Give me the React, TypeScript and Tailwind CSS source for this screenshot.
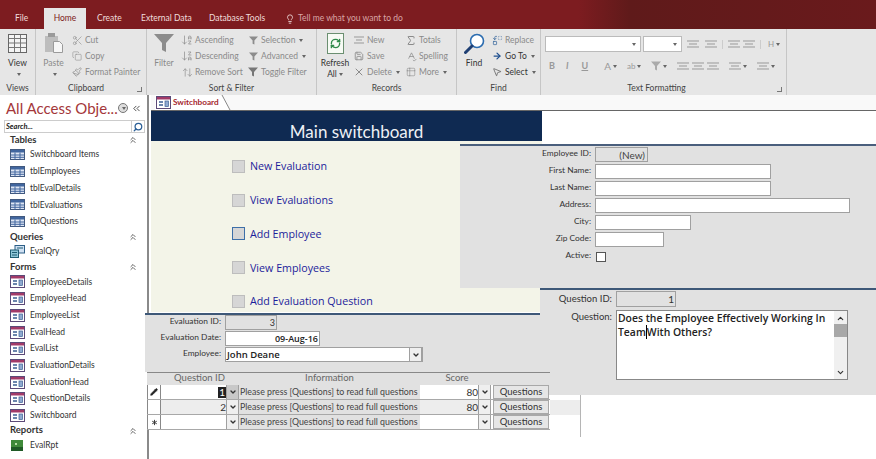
import type { ReactNode } from "react";
import {
  ArrowDownAZ,
  ArrowDownZA,
  ArrowRight,
  ArrowUpDown,
  Asterisk,
  ChevronDown,
  ChevronsLeft,
  ChevronsUp,
  ChevronUp,
  Copy,
  Lightbulb,
  MousePointer2,
  Paintbrush,
  Pencil,
  RefreshCw,
  Replace,
  Save,
  Scissors,
  Search,
  Sigma,
  SpellCheck,
  Table2,
  X,
} from "lucide-react";

const font = "font-['Lato','Open_Sans',sans-serif]";

function Caret() {
  return <span className="ml-[2px] inline-block h-0 w-0 border-x-[2px] border-t-[3px] border-x-transparent border-t-[#666]" />;
}

function TableIcon() {
  return (
    <svg width="15" height="11" viewBox="0 0 15 11" className="shrink-0">
      <rect x="0.5" y="0.5" width="14" height="10" fill="#dfe6f3" stroke="#41597f" />
      <rect x="1" y="1" width="13" height="2.5" fill="#41669f" />
      <path d="M5 3.5v7M10 3.5v7M1 6h13M1 8.3h13" stroke="#41669f" />
    </svg>
  );
}

function QueryIcon() {
  return (
    <svg width="15" height="13" viewBox="0 0 15 13" className="shrink-0">
      <rect x="5" y="0.5" width="9.5" height="7.5" fill="#cfe0f2" stroke="#2d5f86" />
      <rect x="0.5" y="5" width="8" height="7.5" fill="#8ec7d8" stroke="#1f5d72" />
      <path d="M2 7.5h5M2 10h5M7 3h6" stroke="#1f5d72" />
    </svg>
  );
}

function FormIcon() {
  return (
    <svg width="15" height="13" viewBox="0 0 15 13" className="shrink-0">
      <rect x="0.5" y="0.5" width="14" height="12" fill="#fff" stroke="#5c4a78" />
      <rect x="1" y="1" width="13" height="2.5" fill="#a23a68" />
      <path d="M3 6h4M3 9h4" stroke="#3d5f93" strokeWidth="1.5" />
      <rect x="9" y="5" width="3.5" height="5.5" fill="#8fa9d0" stroke="#3d5f93" strokeWidth="0.7" />
    </svg>
  );
}

function ReportIcon() {
  return (
    <svg width="12" height="11" viewBox="0 0 12 11" className="ml-[1px] mr-[2px] shrink-0">
      <rect width="12" height="11" fill="#3f8a3a" />
      <rect x="0" y="7" width="12" height="4" fill="#1f5a26" />
      <rect x="4" y="3" width="2" height="2" fill="#b9e0a8" />
    </svg>
  );
}

function NavHeader({ children }: { children: ReactNode }) {
  return (
    <div className="flex h-[13.5px] items-center justify-between pl-[10px] pr-[9px] text-[9.5px] font-bold text-[#333]">
      <span>{children}</span>
      <ChevronsUp size={10} strokeWidth={2} className="text-[#444]" />
    </div>
  );
}

function NavItem({ icon, children }: { icon: ReactNode; children: ReactNode }) {
  return (
    <div className="flex h-[16.7px] items-center gap-[5px] pl-[10px] text-[8.5px] text-[#333]">
      {icon}
      <span>{children}</span>
    </div>
  );
}

function NavPane() {
  const tables = ["Switchboard Items", "tblEmployees", "tblEvalDetails", "tblEvaluations", "tblQuestions"];
  const forms = [
    "EmployeeDetails",
    "EmployeeHead",
    "EmployeeList",
    "EvalHead",
    "EvalList",
    "EvaluationDetails",
    "EvaluationHead",
    "QuestionDetails",
    "Switchboard",
  ];
  return (
    <div className="w-[149px] shrink-0 border-r-2 border-[#8a8a8a] bg-white">
      <div className="flex h-[25px] items-center justify-between pl-[6px] pr-[5px] pt-[1px]">
        <span className="whitespace-nowrap text-[15px] leading-none text-[#a4373a]">All Access Obje...</span>
        <span className="flex items-center gap-[3px]">
          <span className="flex h-[10px] w-[10px] items-center justify-center rounded-full border border-[#777] bg-[#ddd]">
            <Caret />
          </span>
          <ChevronsLeft size={11} className="text-[#444]" />
        </span>
      </div>
      <div className="ml-[4px] mr-[2px] flex h-[13px] items-center justify-between border border-[#ccc] pl-[1px] text-[7.5px] italic text-[#222]">
        <span className="font-bold">Search...</span>
        <span className="flex h-full w-[13px] items-center justify-center border-l border-[#ccc]">
          <Search size={10} strokeWidth={3} className="-scale-x-100 text-[#2b5f97]" />
        </span>
      </div>
      <NavHeader>Tables</NavHeader>
      {tables.map((t) => (
        <NavItem key={t} icon={<TableIcon />}>
          {t}
        </NavItem>
      ))}
      <NavHeader>Queries</NavHeader>
      <NavItem icon={<QueryIcon />}>EvalQry</NavItem>
      <NavHeader>Forms</NavHeader>
      {forms.map((f) => (
        <NavItem key={f} icon={<FormIcon />}>
          {f}
        </NavItem>
      ))}
      <NavHeader>Reports</NavHeader>
      <NavItem icon={<ReportIcon />}>EvalRpt</NavItem>
    </div>
  );
}

function Group({ width, label, labelPad = "", launcher, children }: { width: string; label: string; labelPad?: string; launcher?: boolean; children: ReactNode }) {
  return (
    <div className={`${width} relative flex shrink-0 flex-col border-r border-[#c6c6c6]`}>
      <div className="flex h-[54px] pt-[3px]">{children}</div>
      <div className={`${labelPad} text-center text-[8.5px] leading-[11px] text-[#444]`}>{label}</div>
      {launcher && <span className="absolute bottom-[3px] right-[4px] h-[5px] w-[5px] border-b border-r border-[#777]" />}
    </div>
  );
}

function Small({ icon, children, muted, caret }: { icon: ReactNode; children: ReactNode; muted?: boolean; caret?: boolean }) {
  return (
    <div className={`flex h-[16px] items-center gap-[2px] whitespace-nowrap text-[8.5px] ${muted ? "text-[#8a8a8a]" : "text-[#333]"}`}>
      <span className="flex w-[12px] shrink-0 justify-center">{icon}</span>
      {children}
      {caret && <Caret />}
    </div>
  );
}

function Big({ width, icon, muted, lines, caret }: { width: string; icon: ReactNode; muted?: boolean; lines: string[]; caret?: boolean }) {
  return (
    <div className={`${width} flex shrink-0 flex-col items-center text-[8.5px] leading-[11px] ${muted ? "text-[#8a8a8a]" : "text-[#333]"}`}>
      <div className="flex h-[22px] items-center">{icon}</div>
      <div className="mt-[4px]">{lines[0]}</div>
      <div className="flex h-[11px] items-center">
        {lines[1]}
        {caret && <Caret />}
      </div>
    </div>
  );
}

function Funnel({ size = 20, color = "#8c8c8c" }: { size?: number; color?: string }) {
  return (
    <svg width={size} height={size} viewBox="0 0 20 20">
      <path d="M0 1h20L12 10v9l-4-2v-7z" fill={color} />
    </svg>
  );
}

function FmtLines({ w = 12 }: { w?: number }) {
  return (
    <svg width={w} height="9" viewBox={`0 0 ${w} 9`}>
      <path d={`M0 1h${w}M2 4h${w - 4}M0 7h${w}`} stroke="#999" />
    </svg>
  );
}

function Ribbon() {
  return (
    <div className="flex h-[66px] bg-[#e6e6e6]">
      <Group width="w-[36px]" label="Views">
        <Big
          width="w-[35px]"
          lines={["View", ""]}
          caret
          icon={
            <svg width="19" height="19" viewBox="0 0 19 19">
              <rect x="0.5" y="0.5" width="18" height="18" fill="#f4f4f4" stroke="#666" />
              <path d="M1 4.5h17M1 9h17M1 13.5h17M6.5 1v17M12.5 1v17" stroke="#777" />
            </svg>
          }
        />
      </Group>
      <Group width="w-[111px]" label="Clipboard" labelPad="pr-[10px]" launcher>
        <Big
          width="w-[35px]"
          muted
          lines={["Paste", ""]}
          caret
          icon={
            <svg width="20" height="20" viewBox="0 0 20 20">
              <rect x="1" y="3" width="13" height="16" fill="#bdbdbd" />
              <rect x="4" y="0" width="7" height="4" fill="#9a9a9a" />
              <path d="M9.5 8.5h6l3 3v8h-9z" fill="#f6f6f6" stroke="#9a9a9a" />
            </svg>
          }
        />
        <div>
          <Small muted icon={<Scissors size={11} strokeWidth={1.3} />}>Cut</Small>
          <Small muted icon={<Copy size={10} strokeWidth={1.3} />}>Copy</Small>
          <Small muted icon={<Paintbrush size={10} strokeWidth={1.6} />}>Format Painter</Small>
        </div>
      </Group>
      <Group width="w-[170px]" label="Sort & Filter">
        <Big width="w-[34px]" muted lines={["Filter", ""]} icon={<Funnel />} />
        <div className="w-[66px]">
          <Small muted icon={<ArrowDownAZ size={12} strokeWidth={1.4} />}>Ascending</Small>
          <Small muted icon={<ArrowDownZA size={12} strokeWidth={1.4} />}>Descending</Small>
          <Small muted icon={<ArrowUpDown size={11} strokeWidth={1.4} />}>Remove Sort</Small>
        </div>
        <div>
          <Small muted caret icon={<Funnel size={9} />}>Selection</Small>
          <Small muted caret icon={<Funnel size={9} />}>Advanced</Small>
          <Small muted icon={<Funnel size={10} color="#777" />}>Toggle Filter</Small>
        </div>
      </Group>
      <Group width="w-[140px]" label="Records">
        <Big
          width="w-[36px]"
          lines={["Refresh", "All"]}
          caret
          icon={
            <span className="flex h-[21px] w-[17px] items-center justify-center border border-[#6b8f71] bg-[#f7fbf5]">
              <RefreshCw size={11} strokeWidth={3} className="text-[#2f8a4a]" />
            </span>
          }
        />
        <div className="w-[52px]">
          <Small muted icon={<FmtLines w={10} />}>New</Small>
          <Small muted icon={<Save size={10} />}>Save</Small>
          <Small muted caret icon={<X size={12} />}>Delete</Small>
        </div>
        <div>
          <Small muted icon={<Sigma size={13} strokeWidth={2} />}>Totals</Small>
          <Small muted icon={<SpellCheck size={11} strokeWidth={1.6} />}>Spelling</Small>
          <Small muted caret icon={<Table2 size={10} strokeWidth={1.4} />}>More</Small>
        </div>
      </Group>
      <Group width="w-[84px]" label="Find">
        <Big
          width="w-[34px]"
          lines={["Find", ""]}
          icon={
            <svg width="21" height="21" viewBox="0 0 21 21">
              <circle cx="13" cy="8" r="6.5" fill="#fff" stroke="#2b6cb0" strokeWidth="1.6" />
              <path d="M8 13l-6.5 6.5" stroke="#1f3f73" strokeWidth="3" strokeLinecap="round" />
            </svg>
          }
        />
        <div>
          <Small muted icon={<Replace size={11} strokeWidth={1.5} className="text-[#2b5f97]" />}>Replace</Small>
          <Small caret icon={<ArrowRight size={10} strokeWidth={3} className="text-[#1f4f8f]" />}>Go To</Small>
          <Small caret icon={<MousePointer2 size={10} strokeWidth={1.4} />}>Select</Small>
        </div>
      </Group>
      <Group width="w-[246px]" label="Text Formatting" labelPad="pr-[14px]" launcher>
        <div className="flex flex-col gap-[7px] pl-[4px] pt-[4px] text-[#999]">
          <div className="flex h-[16px] items-center gap-[2px]">
            <div className="flex h-[16px] w-[96px] items-center justify-end border border-[#bbb] bg-white pr-[4px]"><Caret /></div>
            <div className="flex h-[16px] w-[39px] items-center justify-end border border-[#bbb] bg-white pr-[4px]"><Caret /></div>
            <span className="ml-[3px] flex gap-[6px] border-r border-[#ccc] pr-[5px]"><FmtLines /><FmtLines /></span>
            <span className="ml-[3px] flex gap-[3px] border-r border-[#ccc] pr-[5px]"><FmtLines /><FmtLines /></span>
            <span className="ml-[5px] flex items-center text-[8px]">H<Caret /></span>
          </div>
          <div className="flex h-[14px] items-center gap-[10px] pl-[4px] text-[9px] font-bold">
            <span className="mr-[1px]">B</span>
            <span className="mr-[3px] italic">I</span>
            <span className="underline">U</span>
            <span className="ml-[6px] flex items-center text-[10px] font-normal">A<Caret /></span>
            <span className="flex items-center text-[8px] font-normal">ab<Caret /></span>
            <span className="flex items-center"><Funnel size={10} color="#aaa" /><Caret /></span>
            <span className="flex gap-[3px]"><FmtLines /><FmtLines /><FmtLines /></span>
            <span className="flex items-center"><FmtLines /><Caret /></span>
            <span className="flex items-center"><FmtLines /><Caret /></span>
          </div>
        </div>
      </Group>
    </div>
  );
}

function TopBar() {
  return (
    <div className="h-[29px] bg-[linear-gradient(90deg,#7d1c20_0%,#7d1c20_66%,#5f1a1a_72%,#6a1a1c_100%)] pt-[8px]">
      <div className="flex h-[21px] items-center whitespace-nowrap pl-[15px] text-[8.5px] text-[#f0dcdc]">
        <span className="w-[10px]">File</span>
        <span className="ml-[19px] flex h-[21px] w-[42px] items-center justify-center bg-[#e6e6e6] text-[#7d1c20]">Home</span>
        <span className="ml-[11px] w-[23px]">Create</span>
        <span className="ml-[21px] w-[47px]">External Data</span>
        <span className="ml-[21px] w-[56px]">Database Tools</span>
        <Lightbulb size={10} className="ml-[20px] mr-[3px]" />
        <span className="text-[#d9a6a6]">Tell me what you want to do</span>
      </div>
    </div>
  );
}

function Field({ label, width, children, labelW, labelSize = "text-[8.4px]", box = "h-[15px] border border-[#a0a0a0] bg-white" }: { label: string; width: string; children?: ReactNode; labelW: string; labelSize?: string; box?: string }) {
  return (
    <div className="flex items-center gap-[4px]">
      <div className={`${labelW} ${labelSize} shrink-0 pb-[2px] text-right leading-[11px] text-[#333]`}>{label}</div>
      <div className={`${width} ${box} flex items-center`}>{children}</div>
    </div>
  );
}

const lockedBox = "h-[15px] border border-[#a0a0a0] bg-[#e1e1e1]";

function Switchboard() {
  const items = ["New Evaluation", "View Evaluations", "Add Employee", "View Employees", "Add Evaluation Question"];
  return (
    <div className="flex-1 pl-[2px]">
      <div className="flex h-[16px] items-end border-b border-[#666] bg-[#f9f9f9]">
        <div className="relative ml-[4px] flex h-[15px] w-[66px] items-center gap-[2px] whitespace-nowrap bg-white pl-[1px] text-[8.2px] font-bold text-[#a4262c]">
          <FormIcon />
          Switchboard
          <svg width="10" height="15" viewBox="0 0 10 15" className="absolute left-[66px] top-0">
            <path d="M0 0h1l8 15H0z" fill="#fff" />
            <path d="M1 0l8 15" stroke="#888" fill="none" />
          </svg>
        </div>
      </div>
      <div className="w-[391px]">
        <div className="flex h-[30px] items-center justify-center bg-[#0f2a52] pl-[20px] pt-[10px] text-[17px] leading-none text-[#eef1f5]">Main switchboard</div>
        <div className="h-[171px] bg-[#f3f4e8] pl-[81px] pt-[19px]">
          {items.map((t, i) => (
            <div key={t} className="mb-[20.7px] flex h-[13px] items-center gap-[5px] font-['Open_Sans'] text-[10.7px] font-medium text-[#1d1d9b]">
              <span className={`h-[13px] w-[13px] shrink-0 border bg-[#d6d6d6] ${i === 2 ? "border-[#3d6fa8]" : "border-[#bdbdbd]"}`} />
              {t}
            </div>
          ))}
        </div>
      </div>
    </div>
  );
}

function EmployeeForm() {
  const rows: [string, string][] = [
    ["First Name:", "w-[176px]"],
    ["Last Name:", "w-[176px]"],
    ["Address:", "w-[255px]"],
    ["City:", "w-[96px]"],
    ["Zip Code:", "w-[69px]"],
  ];
  return (
    <div className="absolute left-[460px] top-[144px] flex h-[144px] w-[416px] flex-col gap-[2px] border-t-2 border-[#4a5f7d] bg-[#e1e1e1] pt-[1px]">
      <Field label="Employee ID:" labelW="w-[131px]" width="w-[53px]" box={lockedBox}>
        <span className="w-full pr-[2px] text-right text-[10px] leading-none text-[#444]">(New)</span>
      </Field>
      {rows.map(([l, w]) => (
        <Field key={l} label={l} labelW="w-[131px]" width={w} />
      ))}
      <div className="flex items-center gap-[5px] pt-[1px]">
        <div className="w-[131px] pb-[2px] text-right text-[8.4px] leading-[11px] text-[#333]">Active:</div>
        <span className="h-[10px] w-[10px] border border-[#555] bg-white" />
      </div>
    </div>
  );
}

function QuestionForm() {
  return (
    <div className="absolute left-[540px] top-[288px] h-[107px] w-[336px] border-t-2 border-[#3e5878] bg-[#e1e1e1] pt-[1px]">
      <Field label="Question ID:" labelW="w-[72px]" labelSize="text-[9.5px]" width="w-[60px]" box="h-[16px] border border-[#a0a0a0] bg-[#e1e1e1]">
        <span className="w-full pr-[1px] text-right text-[10px] leading-none text-[#333]">1</span>
      </Field>
      <div className="mt-[3px] flex gap-[4px]">
        <div className="w-[72px] text-right text-[9.5px] leading-[13px] text-[#333]">Question:</div>
        <div className="flex h-[70px] w-[232px] border border-[#888] bg-white">
          <div className="flex-1 pl-[1px] font-['Open_Sans'] text-[10.4px] font-semibold leading-[14px] text-[#222]">
            <div>Does the Employee Effectively Working In</div>
            <div className="flex">
              <span>Team</span>
              <span className="border-l border-black">With Others?</span>
            </div>
          </div>
          <div className="flex w-[13px] shrink-0 flex-col items-center justify-between bg-[#f0f0f0]">
            <div className="flex w-full flex-col items-center">
              <ChevronUp size={9} strokeWidth={3} className="mt-[3px] text-[#333]" />
              <div className="mt-[1px] h-[13px] w-full bg-[#a8a8a8]" />
            </div>
            <ChevronDown size={9} strokeWidth={3} className="mb-[2px] text-[#333]" />
          </div>
        </div>
      </div>
    </div>
  );
}

function ComboArrow({ grey }: { grey?: boolean }) {
  return (
    <span className={`flex h-full w-[13px] shrink-0 items-center justify-center border-x border-[#a0a0a0] ${grey ? "bg-[#c8c8c8]" : "bg-[#efefef]"}`}>
      <ChevronDown size={8} strokeWidth={4} className="text-[#333]" />
    </span>
  );
}

function DataRow({ marker, id, score, shaded, active }: { marker?: ReactNode; id?: string; score?: string; shaded?: boolean; active?: boolean }) {
  const cell = shaded ? "bg-[#ededed]" : "bg-white";
  return (
    <div className="flex h-[15px] items-stretch border-b border-[#a8a8a8]">
      <div className="flex w-[14px] shrink-0 items-center justify-center border-x border-[#888] bg-white">{marker}</div>
      <div className={`${cell} flex w-[65px] shrink-0 items-center justify-end text-[10px] text-[#333]`}>
        {active ? <span className="bg-[#222] px-[1px] leading-[11px] text-white">1</span> : id}
      </div>
      <ComboArrow grey={active} />
      <div className="flex w-[181px] shrink-0 items-center whitespace-nowrap bg-[#e1e1e1] pl-[1px] text-[8.8px] text-[#444]">
        Please press [Questions] to read full questions
      </div>
      <div className={`${cell} flex w-[58px] shrink-0 items-center justify-end text-[10px] text-[#333]`}>{score}</div>
      <ComboArrow />
      <div className="ml-[2px] flex w-[56px] shrink-0 items-center justify-center border border-[#a8a8a8] bg-[#e6e6e6] text-[9.5px] text-[#333]">
        Questions
      </div>
    </div>
  );
}

function EvalForm() {
  return (
    <div className="absolute left-[145px] top-[313px] w-[395px]">
      <div className="h-[59px] border-t-2 border-[#3e5878] bg-[#e1e1e1]">
        <Field label="Evaluation ID:" labelW="w-[76px]" width="w-[52px]" box={lockedBox}>
          <span className="w-full pr-[1px] text-right text-[9px] leading-none text-[#333]">3</span>
        </Field>
        <div className="h-[1px]" />
        <Field label="Evaluation Date:" labelW="w-[76px]" width="w-[95px]">
          <span className="w-full pr-[1px] text-right font-['Open_Sans'] text-[9px] font-semibold leading-none text-[#222]">09-Aug-16</span>
        </Field>
        <div className="h-[1px]" />
        <Field label="Employee:" labelW="w-[76px]" width="w-[198px]">
          <span className="flex-1 pl-[1px] font-['Open_Sans'] text-[9.5px] font-semibold leading-none text-[#222]">John Deane</span>
          <ComboArrow />
        </Field>
      </div>
      <div className="absolute left-[2px] top-[59px] w-[403px]">
        <div className="flex h-[13px] items-center border-t border-[#888] bg-[#e1e1e1] pb-[1px] text-[9.5px] text-[#666]">
          <div className="w-[14px]" />
          <div className="w-[65px] pl-[12px] text-center">Question ID</div>
          <div className="w-[194px] pl-[13px] text-center">Information</div>
          <div className="w-[58px] pl-[16px] text-center">Score</div>
        </div>
        <DataRow active id="1" score="80" marker={<Pencil size={8} fill="#222" className="text-[#222]" />} />
        <DataRow id="2" score="80" shaded />
        <DataRow marker={<Asterisk size={9} strokeWidth={2.5} className="text-[#333]" />} />
      </div>
    </div>
  );
}

export default function App() {
  return (
    <div className={`${font} relative h-[459px] w-[876px] overflow-hidden bg-white`}>
      <TopBar />
      <Ribbon />
      <div className="flex h-[364px]">
        <NavPane />
        <Switchboard />
      </div>
      <EmployeeForm />
      <QuestionForm />
      <EvalForm />
      {/* band of the shaded row and stray edge left over from the form behind */}
      <div className="absolute left-[550px] top-[400px] h-[15px] w-[30px] bg-[#ededed]" />
      <div className="absolute left-[580px] top-[395px] h-[42px] w-[1px] bg-[#b5b5b5]" />
    </div>
  );
}
